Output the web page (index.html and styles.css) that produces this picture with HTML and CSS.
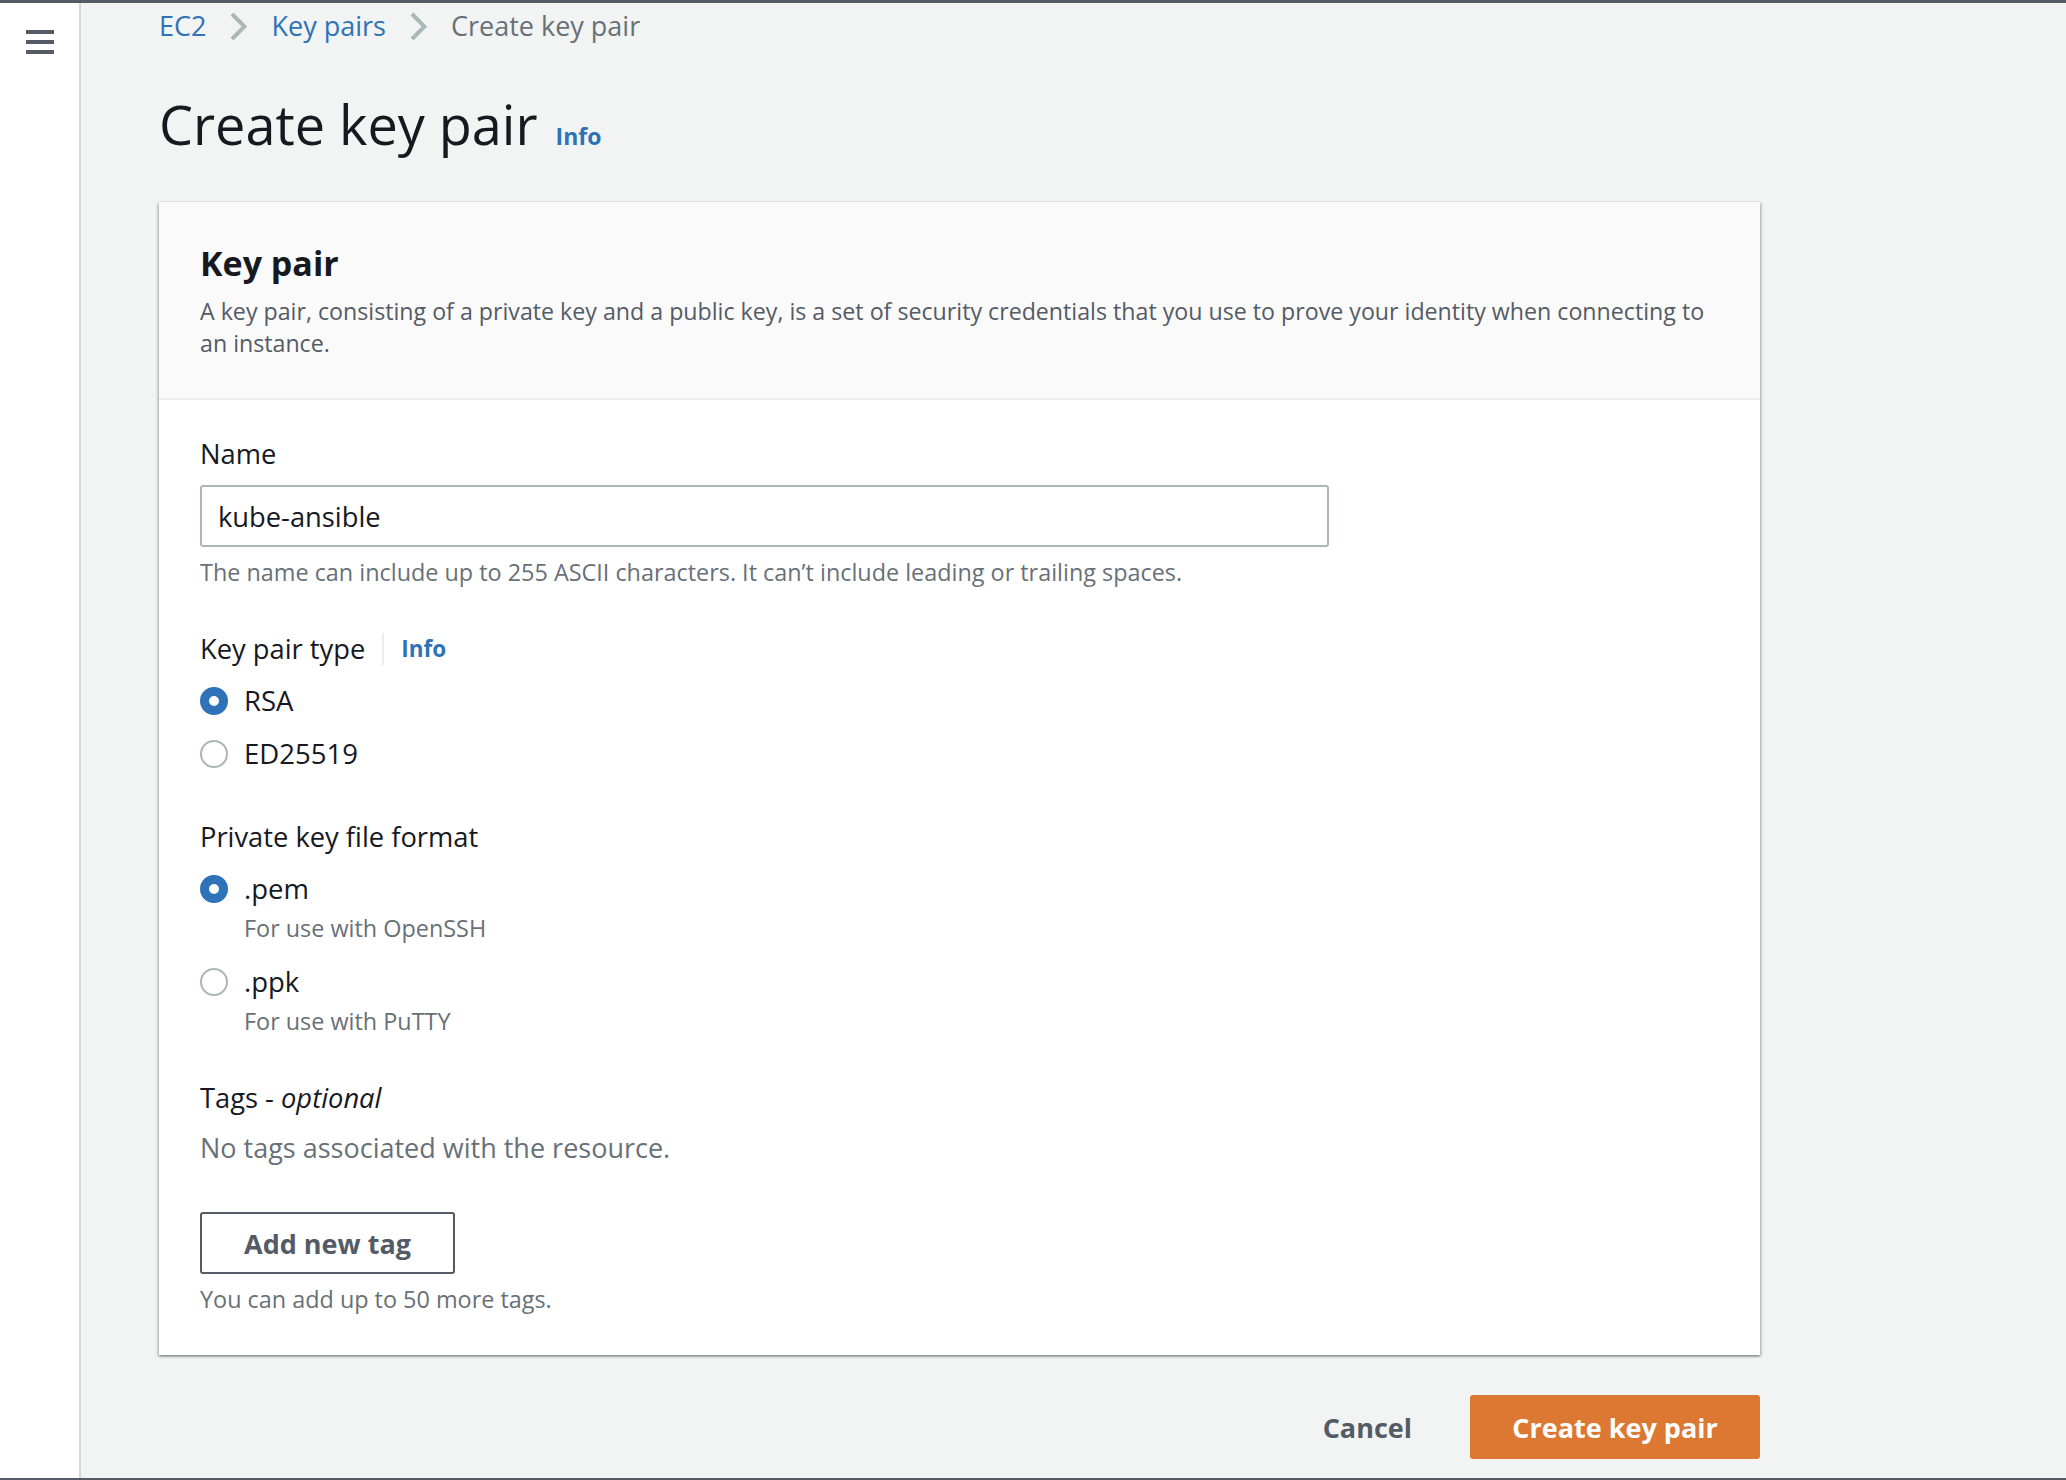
FILE: index.html
```html
<!DOCTYPE html>
<html lang="en">
<head>
<meta charset="utf-8">
<title>Create key pair</title>
<link rel="stylesheet" href="styles.css">
</head>
<body>
<div class="page">
  <aside class="sidebar">
    <button class="menu" aria-label="Open navigation"><span></span><span></span><span></span></button>
  </aside>
  <main class="main">
    <nav class="crumbs">
      <a class="crumb-link" href="#">EC2</a>
      <svg class="chev" width="17" height="29" viewBox="0 0 17 29"><polyline points="2,2 14.5,14.5 2,27" fill="none" stroke="#aab7b8" stroke-width="4"/></svg>
      <a class="crumb-link" href="#">Key pairs</a>
      <svg class="chev" width="17" height="29" viewBox="0 0 17 29"><polyline points="2,2 14.5,14.5 2,27" fill="none" stroke="#aab7b8" stroke-width="4"/></svg>
      <span class="crumb-current">Create key pair</span>
    </nav>

    <div class="title-row">
      <h1 class="title">Create key pair</h1>
      <a class="info info-title" href="#">Info</a>
    </div>

    <section class="panel">
      <header class="panel-header">
        <h2 class="panel-title">Key pair</h2>
        <p class="panel-desc">A key pair, consisting of a private key and a public key, is a set of security credentials that you use to prove your identity when connecting to an instance.</p>
      </header>
      <div class="panel-body">
        <div class="field">
          <label class="label" for="name">Name</label>
          <input class="text-input" id="name" type="text" value="kube-ansible">
          <p class="hint">The name can include up to 255 ASCII characters. It can’t include leading or trailing spaces.</p>
        </div>

        <div class="field field-gap">
          <div class="label-row">
            <span class="label">Key pair type</span>
            <a class="info info-label" href="#">Info</a>
          </div>
          <div class="radios">
            <div class="radio-row"><span class="radio checked"></span><span class="radio-label">RSA</span></div>
            <div class="radio-row"><span class="radio"></span><span class="radio-label">ED25519</span></div>
          </div>
        </div>

        <div class="field field-gap-lg">
          <div class="label">Private key file format</div>
          <div class="radios radios-desc">
            <div class="radio-item">
              <div class="radio-row"><span class="radio checked"></span><span class="radio-label">.pem</span></div>
              <div class="radio-desc">For use with OpenSSH</div>
            </div>
            <div class="radio-item">
              <div class="radio-row"><span class="radio"></span><span class="radio-label">.ppk</span></div>
              <div class="radio-desc">For use with PuTTY</div>
            </div>
          </div>
        </div>

        <div class="field field-gap">
          <div class="label">Tags - <i>optional</i></div>
          <p class="empty">No tags associated with the resource.</p>
          <button class="btn-normal">Add new tag</button>
          <p class="hint">You can add up to 50 more tags.</p>
        </div>
      </div>
    </section>

    <div class="actions">
      <button class="btn-link">Cancel</button>
      <button class="btn-primary">Create key pair</button>
    </div>
  </main>
</div>
</body>
</html>
```

FILE: styles.css
```css
* { box-sizing: border-box; }

html, body {
  margin: 0;
  padding: 0;
}

body {
  height: 1480px;
  overflow: hidden;
  background: #f2f3f3;
  border-top: 3px solid #545b64;
  border-bottom: 2px solid #545b64;
  font-family: "Open Sans", "Noto Sans", sans-serif;
  color: #16191f;
}

.page {
  display: flex;
  height: 100%;
}

.sidebar {
  width: 81px;
  flex: none;
  background: #ffffff;
  border-right: 2px solid #d3d7d7;
  padding: 27px 0 0 26px;
}

.menu {
  display: flex;
  flex-direction: column;
  gap: 6px;
  padding: 0;
  border: 0;
  background: none;
}

.menu span {
  display: block;
  width: 28px;
  height: 4px;
  background: #545b64;
}

.main {
  flex: 1;
  padding: 5px 0 0 78px;
}

/* breadcrumbs */
.crumbs {
  display: flex;
  align-items: center;
  gap: 24px;
  height: 36px;
  font-size: 27px;
  line-height: 36px;
}

.crumb-link {
  color: #2e72b8;
  text-decoration: none;
}

.crumb-current {
  color: #687078;
}

.chev {
  display: block;
  flex: none;
}

/* title */
.title-row {
  display: flex;
  align-items: baseline;
  gap: 18px;
  margin-top: 48px;
}

.title {
  margin: 0;
  font-size: 54px;
  line-height: 64px;
  font-weight: 400;
  color: #16191f;
}

.info {
  color: #2e72b8;
  font-weight: 700;
  text-decoration: none;
}

.info-title {
  font-size: 23px;
}

/* panel */
.panel {
  width: 1601px;
  margin-top: 46px;
  background: #ffffff;
  box-shadow: 0 2px 2px 0 rgba(0, 28, 36, 0.3),
              2px 1px 2px 0 rgba(0, 28, 36, 0.15),
              -2px 1px 2px 0 rgba(0, 28, 36, 0.15),
              0 -1px 1px 0 rgba(0, 28, 36, 0.06);
}

.panel-header {
  background: #fafafa;
  border-bottom: 2px solid #eaeded;
  padding: 39px 40px 39px 41px;
}

.panel-title {
  margin: 0;
  font-size: 34px;
  line-height: 44px;
  font-weight: 700;
  color: #16191f;
}

.panel-desc {
  margin: 10px 0 0;
  font-size: 23.2px;
  line-height: 32px;
  color: #545b64;
}

.panel-body {
  padding: 36px 41px 40px;
}

.field {
  display: flex;
  flex-direction: column;
  align-items: flex-start;
}

.field-gap { margin-top: 43px; }
.field-gap-lg { margin-top: 47px; }

.label {
  font-size: 27.3px;
  line-height: 36px;
  color: #16191f;
}

.label i {
  font-style: italic;
}

.text-input {
  margin-top: 13px;
  width: 1129px;
  height: 62px;
  padding: 0 16px;
  border: 2px solid #aab7b8;
  border-radius: 3px;
  background: #ffffff;
  font-family: inherit;
  font-size: 27.3px;
  color: #16191f;
  outline: none;
}

.hint {
  margin: 9px 0 0;
  font-size: 23.4px;
  line-height: 32px;
  color: #687078;
}

.label-row {
  display: flex;
  align-items: center;
  height: 36px;
}

.info-label {
  font-size: 22.5px;
  margin-left: 17px;
  padding-left: 17px;
  border-left: 2px solid #eaeded;
  line-height: 32px;
}

.radios {
  display: flex;
  flex-direction: column;
  gap: 17px;
  margin-top: 16px;
}

.radios-desc {
  gap: 20px;
}

.radio-row {
  display: flex;
  align-items: center;
  gap: 16px;
  height: 36px;
}

.radio {
  width: 28px;
  height: 28px;
  border-radius: 50%;
  border: 2px solid #aab7b8;
  background: #ffffff;
  flex: none;
}

.radio.checked {
  border: 9.5px solid #2e72b8;
}

.radio-label {
  font-size: 27.5px;
  line-height: 36px;
  color: #16191f;
}

.radio-desc {
  margin-top: 5px;
  padding-left: 44px;
  font-size: 23.4px;
  line-height: 32px;
  color: #687078;
}

.empty {
  margin: 15px 0 0;
  font-size: 27px;
  line-height: 34px;
  color: #687078;
}

.btn-normal {
  margin-top: 47px;
  width: 255px;
  height: 62px;
  border: 2px solid #545b64;
  border-radius: 3px;
  background: #ffffff;
  color: #545b64;
  font-family: inherit;
  font-size: 27px;
  font-weight: 700;
  padding: 0;
}

/* actions */
.actions {
  width: 1601px;
  margin-top: 40px;
  display: flex;
  justify-content: flex-end;
  align-items: center;
  gap: 30px;
}

.btn-link {
  height: 64px;
  padding: 0 28px;
  border: 0;
  background: none;
  color: #545b64;
  font-family: inherit;
  font-size: 27px;
  font-weight: 700;
}

.btn-primary {
  width: 290px;
  height: 64px;
  border: 0;
  border-radius: 3px;
  background: #dd7833;
  color: #ffffff;
  font-family: inherit;
  font-size: 27px;
  font-weight: 700;
}
```
